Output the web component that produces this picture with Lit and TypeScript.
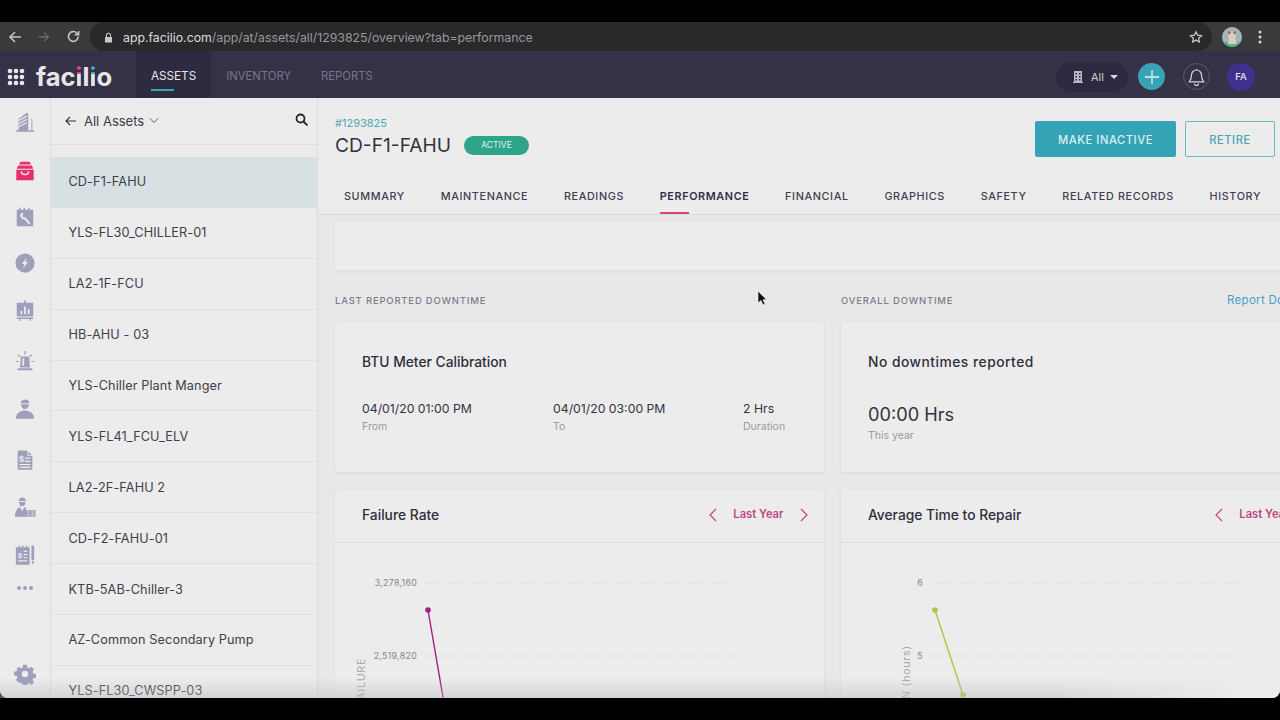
import { LitElement, html, css, svg } from "lit";
import { customElement } from "lit/decorators.js";

const ASSETS = [
  "CD-F1-FAHU",
  "YLS-FL30_CHILLER-01",
  "LA2-1F-FCU",
  "HB-AHU - 03",
  "YLS-Chiller Plant Manger",
  "YLS-FL41_FCU_ELV",
  "LA2-2F-FAHU 2",
  "CD-F2-FAHU-01",
  "KTB-5AB-Chiller-3",
  "AZ-Common Secondary Pump",
  "YLS-FL30_CWSPP-03",
];

const TABS = ["SUMMARY", "MAINTENANCE", "READINGS", "PERFORMANCE", "FINANCIAL", "GRAPHICS", "SAFETY", "RELATED RECORDS", "HISTORY"];

const BG = "#ececed";

// side rail icons, all on a 24 box. gap = space above the icon
const RAIL = [
  {
    gap: 13,
    icon: svg`<path d="M5 21V8.500L14 2l1.500 1v18H19V8l1 1v12h2v1.500H2V21z" /><path d="m5 10.500 9-5M5 14l9-5M5 17.500l9-5" stroke=${BG} stroke-width="1.300" fill="none" />`,
  },
  {
    gap: 27,
    icon: svg`<path d="M7 2h10l1.500 3h-13zM4.500 6h15L21 9.500H3zM2.500 10.500H21.500V22h-19z" /><path d="M8 12.500c0 4.500 8 4.500 8 0" stroke=${BG} stroke-width="1.600" fill="none" />`,
  },
  {
    gap: 24,
    icon: svg`<path d="M3 4h2.500V2h1.500v2h3.500V2h1.500v2h3.500V2h1.500v2H21v18H3z" /><path d="M8 9a3.500 3.500 0 0 0 4 4.500l5 6" stroke=${BG} stroke-width="2.200" fill="none" /><path d="M7 9.500 9 7l1.500 1.500-1.500 2z" fill=${BG} />`,
  },
  {
    gap: 24,
    icon: svg`<path d="M12 1.500a10.500 10.500 0 1 1 0 21 10.500 10.500 0 0 1 0-21zm1.500 5-5 6.500h2.800l-1 4.500 5-6.500h-2.800z" fill-rule="evenodd" />`,
  },
  {
    gap: 26,
    icon: svg`<path d="M11 0.500h2V3h8v15H3V3h8zM7 12v3.500h2V12zm4-5v8.500h2V7zm4 3v5.500h2V10zM3 19h18v1.800h-2.500V23H17v-2.200H7V23H5.500v-2.200H3z" fill-rule="evenodd" />`,
  },
  {
    gap: 28,
    icon: svg`<path d="M7.500 7h9l1 12h-11zM9.500 9l-.6 8h2l.4-8zM4 20h16v2.200H4zM11.300 1h1.400v4h-1.400zM2 12h3v1.200H2zM19 12h3v1.200h-3zM4.800 4.500l2.400 2.400-.9.900-2.400-2.400zM19.200 4.500l.9.900-2.400 2.400-.9-.900z" fill-rule="evenodd" />`,
  },
  {
    gap: 26,
    icon: svg`<path d="M12 1.500c2.700 0 4.800 1.600 4.800 4.300H7.200C7.200 3.100 9.300 1.500 12 1.500zM7.700 6.800h8.600c-.2 2.900-1.900 5.200-4.300 5.200s-4.100-2.300-4.300-5.200zM2 22.500c0-5 3.700-9 10-9s10 4 10 9z" />`,
  },
  {
    gap: 29,
    icon: svg`<path d="M4 1.500h10.500L20 7v15.500H4z" /><path d="M15 1.500V7h5" stroke=${BG} stroke-width="1" fill="none" /><path d="M12 10h6M12 13.500h6M6 17h12M6 20h12" stroke=${BG} stroke-width="1.300" />
      <text x="5.500" y="14" font-size="10" font-weight="700" font-family="Liberation Sans, sans-serif" fill=${BG}>$</text>`,
  },
  {
    gap: 25,
    icon: svg`<path d="M5 5.500C5 3 6.700 1.500 9 1.500s4 1.500 4 4zM5.500 6.500h7c0 2.700-1.400 4.800-3.500 4.800S5.500 9.200 5.500 6.500zM1 22.500c0-6 2.700-9.500 5.500-10.500L9 17l2-5 2 1v9.500z" /><path d="M12.500 15.500h11v7h-11z" /><path d="M14.500 17.500h2.500M14.500 20.500h2.500M19 17.500h3M19 20.500h3" stroke=${BG} stroke-width="1.200" />`,
  },
  {
    gap: 26,
    icon: svg`<path d="M2 3.500h3v-2h1.500v2H9v-2h1.500v2h2.500v-2h1.500v2H17v19H2z" /><path d="M10.500 8h4M10.500 11.500h4M10.500 15h4M4.500 18.500h10" stroke=${BG} stroke-width="1.300" /><text x="4" y="15" font-size="8.500" font-weight="700" font-family="Liberation Sans, sans-serif" fill=${BG}>$</text><path d="M19 1.500h3v16h-3zM19 18.500h3l-1.500 4z" />`,
  },
];

@customElement("app-root")
export class AppRoot extends LitElement {
  static styles = css`
    :host {
      display: block;
      width: 1280px;
      height: 720px;
      background: #000;
      overflow: hidden;
      position: relative;
      font-family: Inter, "Liberation Sans", sans-serif;
      color: #2f3040;
    }
    .chrome {
      margin-top: 22px;
      height: 29px;
      background: #3a3a3c;
      display: flex;
      align-items: center;
      color: #bdbdbf;
    }
    .chrome svg { display: block; flex: none; }
    .chrome .nav-ic { margin-left: 7px; margin-right: 7px; }
    .chrome .nav-ic.reload { margin-left: 8px; margin-right: 5px; }
    .omni {
      margin-left: 4px;
      width: 1122px;
      height: 29px;
      background: #29292b;
      border-radius: 15px;
      display: flex;
      align-items: center;
      font-size: 12.300px;
      padding-left: 14px;
      box-sizing: border-box;
      color: #98989b;
    }
    .omni span { padding-top: 1px; }
    .omni b { font-weight: 400; color: #dcdcde; }
    .omni .lock { margin-right: 10px; margin-top: 1px; }
    .omni .star { margin-left: auto; margin-right: 9px; margin-top: 1px; }
    .profile { margin-left: 10px; margin-top: 1px; }
    .kebab { margin-left: 16px; margin-top: 1px; }
    .topnav {
      height: 47px;
      background: #353147;
      display: flex;
      align-items: center;
      color: #e8e8ea;
    }
    .apps { margin-left: 7px; margin-top: 4px; width: 18px; height: 18px; flex: none; }
    .logo {
      margin-left: 11px;
      width: 100px;
      font-size: 25.600px;
      font-weight: 700;
      color: #e6e6e8;
      line-height: 47px;
      padding-top: 2px;
      box-sizing: border-box;
      height: 47px;
    }
    .logo i {
      font-style: normal;
      background: linear-gradient(var(--dot) 42%, #e6e6e8 42%);
      -webkit-background-clip: text;
      background-clip: text;
      color: transparent;
    }
    .logo i.pink { --dot: #e8437e; }
    .logo i.teal { --dot: #43b0bf; }
    .navitem {
      height: 47px;
      display: flex;
      align-items: center;
      font-size: 11.300px;
      color: #77778a;
      position: relative;
      padding: 3px 15px 0;
      box-sizing: border-box;
    }
    .navitem.on {
      color: #e6e6ea;
      background: #2e2a40;
      font-size: 11.700px;
    }
    .navitem.on::after {
      content: "";
      position: absolute;
      left: 15px;
      bottom: 7px;
      width: 23px;
      height: 2px;
      background: #37a5b5;
    }
    .navright {
      margin-left: auto;
      margin-top: 4px;
      display: flex;
      align-items: center;
    }
    .pill {
      width: 72px;
      height: 30px;
      border-radius: 15px;
      background: #2c2940;
      display: flex;
      align-items: center;
      font-size: 11px;
      box-sizing: border-box;
      padding-left: 17px;
      color: #cfcfd6;
      gap: 8px;
    }
    .pill .caret { margin-left: -2px; }
    .plus {
      width: 27px;
      height: 27px;
      border-radius: 50%;
      background: #37a3b5;
      margin-left: 10px;
      display: grid;
      place-items: center;
    }
    .bell {
      width: 25px;
      height: 25px;
      border-radius: 50%;
      border: 1px solid #5d5a70;
      margin-left: 18px;
      display: grid;
      place-items: center;
    }
    .fa {
      width: 28px;
      height: 28px;
      border-radius: 50%;
      background: #42308f;
      margin-left: 17px;
      margin-right: 25px;
      display: grid;
      place-items: center;
      font-size: 9.500px;
      font-weight: 500;
      color: #e4e4f0;
    }
    .body {
      height: 600px;
      display: flex;
      background: #e8e8e9;
      overflow: hidden;
      border-radius: 0 0 8px 8px;
    }
    .rail {
      width: 50px;
      flex: none;
      background: #ececed;
      border-right: 1px solid #dcdcde;
      display: flex;
      flex-direction: column;
      align-items: center;
      color: #9f9fbb;
    }
    .rail svg { width: 22px; height: 22px; display: block; fill: currentColor; flex: none; }
    .rail svg.hot { color: #e5306f; }
    .rail .dots { display: flex; gap: 2px; margin-top: 20px; }
    .rail .dots span { width: 4px; height: 4px; border-radius: 50%; background: #9f9fbb; }
    .rail svg.gear { margin-top: auto; margin-bottom: 13px; }
    .list {
      width: 266px;
      flex: none;
      background: #ececed;
      border-right: 1px solid #dcdcde;
    }
    .listhead {
      height: 46px;
      border-bottom: 1px solid #dedee0;
      display: flex;
      align-items: center;
      font-size: 13px;
      color: #3a3a48;
      padding-left: 14px;
      padding-right: 9px;
    }
    .listhead .title { margin-left: 8px; margin-right: 5px; }
    .listhead .search { margin-left: auto; margin-top: -3px; }
    .rows { padding-top: 12px; }
    .row {
      height: 50.900px;
      box-sizing: border-box;
      border-bottom: 1px solid #e0e0e2;
      display: flex;
      align-items: center;
      padding: 0 0 0 17.500px;
      font-size: 12.700px;
      letter-spacing: 0.1px;
      color: #3e3e4c;
    }
    .row.on { background: #d7e1e4; border-bottom-color: #d7e1e4; }
    .main { flex: 1; min-width: 0; display: flex; flex-direction: column; }
    .head {
      height: 117px;
      flex: none;
      background: #ececed;
      border-bottom: 1px solid #dadadc;
      box-sizing: border-box;
    }
    .headtop {
      display: flex;
      justify-content: space-between;
      padding: 18px 5px 0 17px;
      height: 82px;
      box-sizing: border-box;
    }
    .id { font-size: 11px; color: #52a8b4; line-height: 14px; margin-bottom: 2px; }
    .name { display: flex; align-items: center; gap: 13px; font-size: 19.200px; line-height: 26px; color: #33333f; }
    .badge {
      width: 65px;
      height: 19px;
      border-radius: 10px;
      background: #2ea58a;
      color: #dff2ed;
      font-size: 8.500px;
      line-height: 1;
      display: grid;
      place-items: center;
    }
    .btns { display: flex; gap: 9px; padding-top: 5px; }
    .btn {
      height: 36px;
      box-sizing: border-box;
      border-radius: 2px;
      display: grid;
      place-items: center;
      padding-top: 2px;
      font-size: 11.200px;
      font-weight: 500;
      letter-spacing: 0.55px;
    }
    .btn.fill { width: 141px; background: #34a3b5; color: #dbeef1; }
    .btn.line { width: 90px; border: 1px solid #6db6c3; color: #4ba3b3; }
    .tabs { display: flex; gap: 35.700px; padding-left: 26px; white-space: nowrap; }
    .tab {
      height: 34px;
      line-height: 33px;
      font-size: 10.800px;
      font-weight: 500;
      letter-spacing: 0.63px;
      color: #3f3f4d;
      position: relative;
    }
    .tab.on { color: #2f2f45; font-weight: 600; }
    .tab.on::after {
      content: "";
      position: absolute;
      left: 0;
      bottom: 0;
      width: 29px;
      height: 2px;
      background: #d8476f;
    }
    .scroll { padding: 7px 0 0 17px; flex: 1; overflow: hidden; }
    .strip {
      height: 48px;
      background: #ececed;
      box-shadow: 0 1px 3px rgba(0, 0, 0, 0.08);
    }
    .grid { display: grid; grid-template-columns: 489px 489px; column-gap: 17px; }
    .sect {
      height: 52px;
      display: flex;
      align-items: flex-end;
      justify-content: space-between;
      font-size: 9.500px;
      font-weight: 500;
      letter-spacing: 0.8px;
      color: #7d7d8a;
      padding-bottom: 16px;
      box-sizing: border-box;
      white-space: nowrap;
    }
    .sect a { color: #4a9fc4; font-size: 11.500px; font-weight: 400; letter-spacing: 0.3px; margin-right: 48px; margin-bottom: -1px; width: 55px; overflow: hidden; }
    .card {
      background: #ececed;
      box-shadow: 0 1px 3px rgba(0, 0, 0, 0.07);
      height: 150px;
      padding: 32px 27px 0;
      box-sizing: border-box;
    }
    .card h3 { margin: 0; font-size: 13.800px; font-weight: 500; line-height: 17px; color: #2f2f3c; }
    .card h3.wide { letter-spacing: 0.5px; }
    .facts { display: grid; grid-template-columns: 191px 190px auto; margin-top: 30px; }
    .fact b { display: block; font-weight: 400; font-size: 12.250px; line-height: 15px; color: #33333f; }
    .fact span { display: block; font-size: 10.500px; line-height: 14px; margin-top: 4px; color: #9a9aa3; }
    .big { font-size: 18.200px; line-height: 24px; color: #33333f; margin-top: 31px; }
    .small { font-size: 10.500px; color: #9a9aa3; margin-top: 3px; }
    .chartcard {
      margin-top: 17px;
      background: #ececed;
      box-shadow: 0 1px 3px rgba(0, 0, 0, 0.07);
      height: 240px;
      overflow: hidden;
    }
    .charthead {
      border-bottom: 1px solid #dcdcde;
      display: flex;
      align-items: center;
      padding: 0 15px 2px 27px;
      height: 51px;
      font-size: 13.800px;
      font-weight: 500;
      color: #2f2f3c;
    }
    .period {
      margin-left: auto;
      display: flex;
      align-items: center;
      font-size: 11.200px;
      font-weight: 600;
      color: #c2457f;
      gap: 15.500px;
      white-space: nowrap;
    }
    .period span { margin-top: -2px; }
    .chartcard svg.plot { display: block; }
    .plot text { font-family: Inter, "Liberation Sans", sans-serif; font-size: 8.800px; fill: #85858d; letter-spacing: 0.3px; }
    .plot text.axis { font-size: 10.500px; fill: #a8a8ae; letter-spacing: 0.8px; }
    .fade {
      position: absolute;
      left: 0;
      width: 1240px;
      top: 678px;
      height: 20px;
      background: linear-gradient(rgba(190, 190, 192, 0), rgba(190, 190, 192, 0.5));
      -webkit-mask-image: linear-gradient(90deg, #000 85%, transparent);
      mask-image: linear-gradient(90deg, #000 85%, transparent);
      pointer-events: none;
    }
    .cursor { position: absolute; left: 757px; top: 291px; }
  `;

  private chart(top: string, mid: string, color: string, x1: number, y1: number, x2: number, y2: number, axis: string, axisX: number, axisY: number) {
    return html`<svg class="plot" width="489" height="190" viewBox="0 0 489 190">
      <line x1="89" x2="398" y1="40" y2="40" stroke="#dcdcde" stroke-dasharray="3 3" />
      <line x1="89" x2="398" y1="113" y2="113" stroke="#dcdcde" stroke-dasharray="3 3" />
      <text x="82" y="43" text-anchor="end">${top}</text>
      <text x="82" y="116" text-anchor="end">${mid}</text>
      <text class="axis" text-anchor="end" transform="translate(${axisX} ${axisY}) rotate(-90)">${axis}</text>
      <line x1=${x1} y1=${y1} x2=${x2} y2=${y2} stroke=${color} stroke-width="1.400" />
      <circle cx=${x1} cy=${y1} r="2.800" fill=${color} />
      ${color === "#b9c23f" ? svg`<circle cx=${x2} cy=${y2} r="2.800" fill=${color} />` : ""}
    </svg>`;
  }

  private period() {
    return html`<div class="period">
      <svg width="10" height="14" viewBox="0 0 10 14" fill="none" stroke="#c2457f" stroke-width="1.200"><path d="M8 1 2 7l6 6" /></svg>
      <span>Last Year</span>
      <svg width="10" height="14" viewBox="0 0 10 14" fill="none" stroke="#c2457f" stroke-width="1.200"><path d="m2 1 6 6-6 6" /></svg>
    </div>`;
  }

  render() {
    return html`
      <div class="chrome">
        <svg class="nav-ic" width="16" height="16" viewBox="0 0 16 16" fill="none" stroke="#c4c4c6" stroke-width="1.600"><path d="M14 8H3M8 3 3 8l5 5" /></svg>
        <svg class="nav-ic" width="14" height="16" viewBox="0 0 16 16" fill="none" stroke="#6c6c70" stroke-width="1.600"><path d="M2 8h11M8 3l5 5-5 5" /></svg>
        <svg class="nav-ic reload" width="15" height="15" viewBox="0 0 16 16" fill="none" stroke="#c4c4c6" stroke-width="1.700"><path d="M13 8a5.200 5.200 0 1 1-1.500-3.700L13 6M13.500 2v4.200H9.300" /></svg>
        <div class="omni">
          <svg class="lock" width="9" height="11" viewBox="0 0 9 11" fill="#c9c9cb"><path d="M1 5h1V3.200a2.500 2.500 0 0 1 5 0V5h1v5.500H1zM3 5h3V3.200a1.500 1.500 0 0 0-3 0z" fill-rule="evenodd" /></svg>
          <span><b>app.facilio.com</b>/app/at/assets/all/1293825/overview?tab=performance</span>
          <svg class="star" width="14" height="14" viewBox="0 0 24 24" fill="none" stroke="#c4c4c6" stroke-width="2.200"><path d="m12 3 2.800 6 6.500.7-4.800 4.400 1.300 6.400L12 17.300 6.200 20.500l1.300-6.400L2.700 9.700 9.200 9z" /></svg>
        </div>
        <svg class="profile" width="20" height="20" viewBox="0 0 20 20">
          <clipPath id="pc"><circle cx="10" cy="10" r="10" /></clipPath>
          <g clip-path="url(#pc)">
            <rect width="20" height="20" fill="#a9b4b6" />
            <rect y="15" width="20" height="5" fill="#4db69c" />
            <path d="M6 4l2 2h4l2-2v5l-1 2 2 6H6l1-6-1-2z" fill="#d9cfc0" />
            <path d="M6 3.500 8 6 7 8zM14 3.500 12 6l1 2z" fill="#3d342c" />
          </g>
        </svg>
        <svg class="kebab" width="4" height="14" viewBox="0 0 4 14" fill="#d6d6d8"><circle cx="2" cy="2" r="1.500" /><circle cx="2" cy="7" r="1.500" /><circle cx="2" cy="12" r="1.500" /></svg>
      </div>
      <div class="topnav">
        <svg class="apps" viewBox="0 0 18 18" fill="#e8e8ea">
          ${[3, 9, 15].map((y) => [3, 9, 15].map((x) => svg`<circle cx=${x} cy=${y} r="2.300" />`))}
        </svg>
        <div class="logo">fac<i class="pink">i</i>l<i class="teal">i</i>o</div>
        <div class="navitem on">ASSETS</div>
        <div class="navitem">INVENTORY</div>
        <div class="navitem">REPORTS</div>
        <div class="navright">
          <div class="pill">
            <svg width="10" height="12" viewBox="0 0 10 12" fill="#b9b9c4"><path d="M1 0h8v11h1v1H0v-1h1zM2.500 2v1.500H4V2zM6 2v1.500h1.500V2zM2.500 5v1.500H4V5zM6 5v1.500h1.500V5zM2.500 8v1.500H4V8zM6 8v1.500h1.500V8z" fill-rule="evenodd" /></svg>
            <span>All</span>
            <svg class="caret" width="8" height="4" viewBox="0 0 8 4" fill="#d8d8de"><path d="M0 0h8L4 4z" /></svg>
          </div>
          <div class="plus"><svg width="14" height="14" viewBox="0 0 14 14" stroke="#dff1f4" stroke-width="1.300"><path d="M7 0v14M0 7h14" /></svg></div>
          <div class="bell"><svg width="17" height="18" viewBox="0 0 17 18" fill="none" stroke="#d5d5dc" stroke-width="1.200"><path d="M8.500 2a5 5 0 0 1 5 5c0 4 1 5 2.200 6.800H1.300C2.500 12 3.500 11 3.500 7a5 5 0 0 1 5-5zM8.500 2V1M6.500 15.500a2 2 0 0 0 4 0" /></svg></div>
          <div class="fa">FA</div>
        </div>
      </div>
      <div class="body">
        <div class="rail">
          ${RAIL.map((r, i) => html`<svg class=${i === 1 ? "hot" : ""} style="margin-top:${r.gap}px" viewBox="0 0 24 24">${r.icon}</svg>`)}
          <div class="dots"><span></span><span></span><span></span></div>
          <svg class="gear" viewBox="0 0 24 24"><path d="M10 2h4l.6 3 1.800.8 2.600-1.700 2.900 2.900-1.700 2.600.8 1.800 3 .6v4l-3 .6-.8 1.800 1.700 2.600-2.900 2.900-2.600-1.700-1.800.8-.6 3h-4l-.6-3-1.800-.8L5 21.400l-2.900-2.900 1.700-2.600-.8-1.800-3-.6v-4l3-.6.8-1.800L2.100 7 5 4.100l2.600 1.700L9.400 5zm2 6.500a3.500 3.500 0 1 0 0 7 3.500 3.500 0 0 0 0-7z" fill-rule="evenodd" /></svg>
        </div>
        <div class="list">
          <div class="listhead">
            <svg width="11" height="10" viewBox="0 0 11 10" fill="none" stroke="#33333f" stroke-width="1.100"><path d="M11 5H1M5 1 1 5l4 4" /></svg>
            <span class="title">All Assets</span>
            <svg width="10" height="6" viewBox="0 0 10 6" fill="none" stroke="#55555f" stroke-width="1"><path d="m1 .5 4 4 4-4" /></svg>
            <svg class="search" width="13" height="13" viewBox="0 0 13 13" fill="none" stroke="#26262e" stroke-width="1.800"><circle cx="5.500" cy="5.500" r="4" /><path d="m8.500 8.500 4 4" /></svg>
          </div>
          <div class="rows">
            ${ASSETS.map((a, i) => html`<div class="row ${i === 0 ? "on" : ""}">${a}</div>`)}
          </div>
        </div>
        <div class="main">
          <div class="head">
            <div class="headtop">
              <div>
                <div class="id">#1293825</div>
                <div class="name">CD-F1-FAHU <span class="badge">ACTIVE</span></div>
              </div>
              <div class="btns">
                <div class="btn fill">MAKE INACTIVE</div>
                <div class="btn line">RETIRE</div>
              </div>
            </div>
            <div class="tabs">
              ${TABS.map((t) => html`<div class="tab ${t === "PERFORMANCE" ? "on" : ""}">${t}</div>`)}
            </div>
          </div>
          <div class="scroll">
            <div class="strip"></div>
            <div class="grid">
              <div class="sect">LAST REPORTED DOWNTIME</div>
              <div class="sect">OVERALL DOWNTIME <a>Report Downtime</a></div>
              <div class="card">
                <h3>BTU Meter Calibration</h3>
                <div class="facts">
                  <div class="fact"><b>04/01/20 01:00 PM</b><span>From</span></div>
                  <div class="fact"><b>04/01/20 03:00 PM</b><span>To</span></div>
                  <div class="fact"><b>2 Hrs</b><span>Duration</span></div>
                </div>
              </div>
              <div class="card">
                <h3 class="wide">No downtimes reported</h3>
                <div class="big">00:00 Hrs</div>
                <div class="small">This year</div>
              </div>
              <div class="chartcard">
                <div class="charthead">Failure Rate ${this.period()}</div>
                ${this.chart("3,278,160", "2,519,820", "#a01f86", 93, 67, 109, 160, "FAILURE", 30, 115)}
              </div>
              <div class="chartcard">
                <div class="charthead">Average Time to Repair ${this.period()}</div>
                ${this.chart("6", "5", "#b9c23f", 94, 67, 122, 152, "DURATION (hours)", 69, 102)}
              </div>
            </div>
          </div>
        </div>
      </div>
      <div class="fade"></div>
      <svg class="cursor" width="10" height="15" viewBox="0 0 10 15"><path d="M1 0v12l3-2.500 2 4.500 2-1-2-4.300h3.500z" fill="#111" stroke="#fff" stroke-width=".6" /></svg>
    `;
  }
}
